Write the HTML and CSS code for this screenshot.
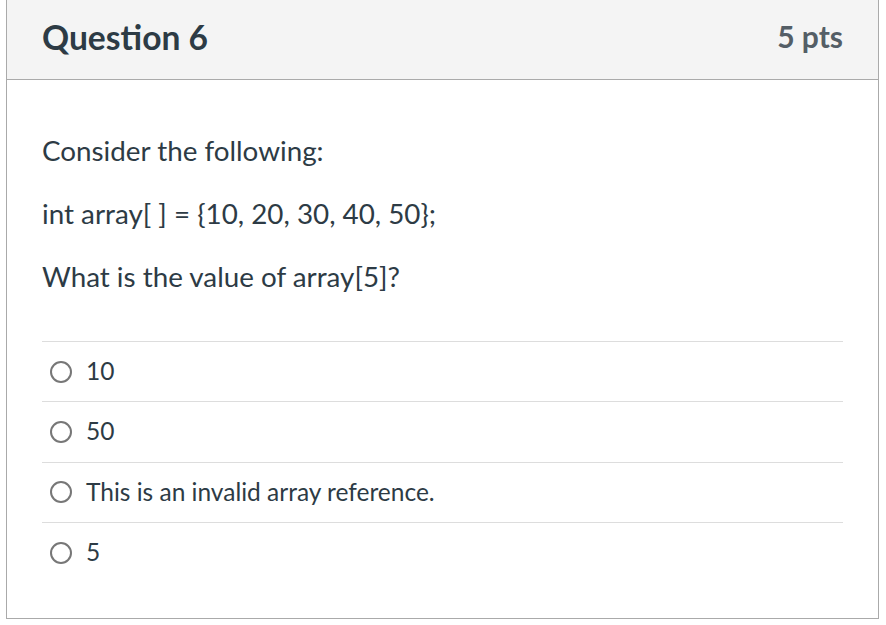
FILE: index.html
```html
<!DOCTYPE html>
<html>
<head>
<meta charset="utf-8">
<link rel="stylesheet" href="styles.css">
</head>
<body>
<div class="question">
  <div class="header">
    <h2 class="title">Question 6</h2>
    <span class="pts">5 pts</span>
  </div>
  <div class="content">
    <div class="text">
      <p>Consider the following:</p>
      <p>int array[ ] = {10, 20, 30, 40, 50};</p>
      <p>What is the value of array[5]?</p>
    </div>
    <div class="answers">
      <label class="answer"><span class="radio"></span><span>10</span></label>
      <label class="answer"><span class="radio"></span><span>50</span></label>
      <label class="answer"><span class="radio"></span><span>This is an invalid array reference.</span></label>
      <label class="answer"><span class="radio"></span><span>5</span></label>
    </div>
  </div>
</div>
</body>
</html>
```
FILE: styles.css
```css
html, body {
  margin: 0;
  padding: 0;
  background: #fff;
  font-family: Lato, "Liberation Sans", sans-serif;
  color: #2d3b45;
}
.question {
  margin: -1px 0 0 6px;
  width: 873px;
  height: 620px;
  box-sizing: border-box;
  border: 1px solid #aaaaaa;
}
.header {
  height: 80px;
  box-sizing: border-box;
  background: #f4f4f4;
  border-bottom: 1px solid #aaaaaa;
  display: flex;
  align-items: center;
  justify-content: space-between;
  padding: 0 35px 0 35px;
}
.title {
  margin: 0;
  font-size: 33.6px;
  font-weight: 700;
  color: #2d3b45;
  position: relative;
  top: -3px;
}
.pts {
  font-size: 30px;
  font-weight: 700;
  color: #545e66;
  position: relative;
  top: -4px;
}
.content {
  padding: 52px 35px 0 35px;
}
.text p {
  margin: 0 0 25px 0;
  font-size: 27.8px;
  line-height: 38px;
}
.answers {
  margin-top: 45px;
}
.answer {
  display: flex;
  align-items: center;
  height: 60.33px;
  box-sizing: border-box;
  border-top: 1px solid #dddddd;
  font-size: 24.5px;
  color: #2d3b45;
  padding-bottom: 2px;
}
.radio {
  width: 18px;
  height: 18px;
  border: 2px solid #777;
  border-radius: 50%;
  margin: 2px 14px 0 8px;
  flex: none;
}
```
